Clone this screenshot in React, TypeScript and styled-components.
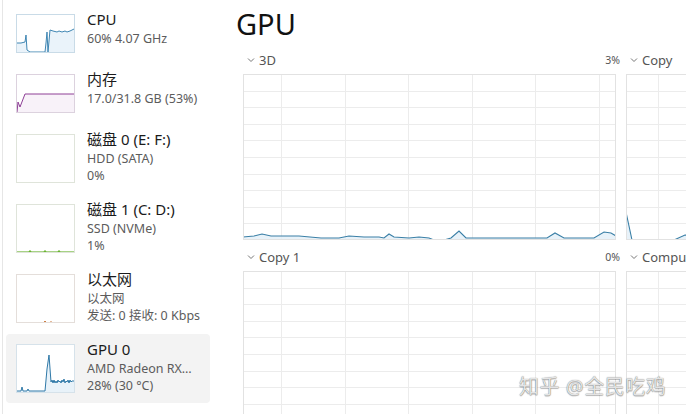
import React from "react";
import styled, { createGlobalStyle } from "styled-components";

const Global = createGlobalStyle`
  html, body { margin: 0; padding: 0; background: #ffffff; }
  body { font-family: "Noto Sans", "Noto Sans CJK SC", sans-serif; overflow: hidden; }
`;

const Page = styled.div`
  position: relative;
  display: flex;
  width: 686px;
  height: 414px;
  overflow: hidden;
  background: #fff;
`;

const Sidebar = styled.nav`
  flex: 0 0 214px;
  margin-left: 2px;
  border-left: 1px solid #e6e6e6;
  padding: 4px 0 0 3px;
  display: flex;
  flex-direction: column;
  gap: 1px;
  box-sizing: border-box;
`;

const Item = styled.div<{ $selected?: boolean }>`
  display: flex;
  align-items: flex-start;
  gap: 12px;
  padding: 10px 10px 10px 10px;
  width: 204px;
  box-sizing: border-box;
  border-radius: 4px;
  background: ${(p) => (p.$selected ? "#f3f3f3" : "transparent")};
`;

const Thumb = styled.div<{ $border: string; $h: number }>`
  flex: 0 0 59px;
  height: ${(p) => p.$h}px;
  box-sizing: border-box;
  border: 1px solid ${(p) => p.$border};
  background: #fff;
  overflow: hidden;
  svg { display: block; }
`;

const Texts = styled.div`
  display: flex;
  flex-direction: column;
  margin-top: -5px;
  margin-bottom: -10px;
  white-space: nowrap;
`;

const ItemTitle = styled.div`
  font-size: 15px;
  line-height: 21px;
  color: #1b1b1b;
`;

const ItemSub = styled.div`
  font-size: 12.5px;
  line-height: 17px;
  color: #5c5c5c;
`;

const Main = styled.main`
  flex: 1 1 auto;
  padding-left: 27px;
  min-width: 0;
  overflow: hidden;
`;

const Title = styled.h1`
  margin: 0 0 0 -7px;
  height: 43px;
  font-size: 29px;
  line-height: 48px;
  font-weight: 400;
  color: #111;
`;

const Grid = styled.div`
  display: grid;
  grid-template-columns: 373px 373px;
  grid-template-rows: 31px 166px 31px 166px;
  column-gap: 10px;
`;

const Head = styled.div`
  display: flex;
  align-items: center;
  padding: 2px 0 0 4px;
  color: #555;
`;

const Label = styled.span`
  font-size: 13px;
  margin-left: 4px;
  flex: 1 1 auto;
  white-space: nowrap;
`;

const Pct = styled.span`
  font-size: 10.5px;
  margin-right: -4px;
  color: #555;
`;

const ChartBox = styled.div`
  width: 373px;
  height: 166px;
  svg { display: block; }
`;

const Watermark = styled.div`
  position: absolute;
  left: 519px;
  top: 373px;
  font-size: 20px;
  line-height: 28px;
  letter-spacing: 0.5px;
  color: rgba(236, 236, 236, 0.95);
  text-shadow: 0 0 1px rgba(0, 0, 0, 0.55), 0 1px 1px rgba(0, 0, 0, 0.25);
  white-space: nowrap;
`;

const Chevron = () => (
  <svg width="8" height="6" viewBox="0 0 8 6">
    <path d="M1 1.5 L4 4.5 L7 1.5" fill="none" stroke="#777" strokeWidth="1" />
  </svg>
);

type Pt = [number, number];

const Spark = ({ pts, h, stroke, fill }: { pts: Pt[]; h: number; stroke: string; fill: string }) => {
  const line = pts.map((p) => p.join(",")).join(" ");
  const area = `0,${h} ${line} 57,${h}`;
  return (
    <svg width="57" height={h} viewBox={`0 0 57 ${h}`}>
      <polygon points={area} fill={fill} />
      <polyline points={line} fill="none" stroke={stroke} strokeWidth="1" />
    </svg>
  );
};

const cpuPts: Pt[] = [
  [0, 28], [4, 28], [8, 27], [9, 20], [10, 35], [13, 37], [20, 37], [28, 37], [29, 28], [30, 17], [31, 37], [33, 15],
  [36, 16], [40, 17], [42, 16], [45, 17], [48, 16], [50, 17], [53, 16], [55, 15], [57, 14],
];
const memPts: Pt[] = [[0, 37], [1, 27], [3, 32], [8, 19], [57, 19]];
const diskPts: Pt[] = [
  [0, 47], [12, 47], [13, 45.5], [14, 47], [27, 47], [28, 45.5], [29, 47], [41, 47], [42, 45.5], [43, 47], [57, 47],
];
const ethPts: Pt[] = [[0, 48], [27, 48], [28, 46], [29, 48], [33, 48], [34, 46.5], [35, 48], [57, 48]];
const gpuPts: Pt[] = [
  [0, 46], [4, 46], [5, 42], [6, 46], [10, 46], [11, 44], [12, 46], [20, 46], [27, 46], [28, 46], [30, 24], [32, 10],
  [34, 37], [35, 35], [36, 38], [37, 35], [38, 38], [39, 36], [40, 38], [41, 35], [42, 37], [43, 36], [44, 38],
  [45, 35], [46, 37], [47, 34], [48, 38], [49, 36], [50, 37], [51, 35], [52, 38], [53, 35], [54, 37], [55, 36], [57, 36],
];

const Chart = ({ offset, pts }: { offset: number; pts?: Pt[] }) => {
  const W = 373;
  const H = 166;
  const hs: number[] = [];
  for (let i = 1; i < 10; i++) hs.push(Math.round((H / 10) * i) + 0.5);
  const vs: number[] = [];
  for (let x = offset; x < W; x += 63.5) vs.push(Math.round(x) + 0.5);
  const line = pts ? pts.map((p) => p.join(",")).join(" ") : "";
  return (
    <svg width={W} height={H} viewBox={`0 0 ${W} ${H}`}>
      {hs.map((y) => (
        <line key={"h" + y} x1="0" x2={W} y1={y} y2={y} stroke="#ececec" strokeWidth="1" />
      ))}
      {vs.map((x) => (
        <line key={"v" + x} x1={x} x2={x} y1="0" y2={H} stroke="#ececec" strokeWidth="1" />
      ))}
      {pts && <polygon points={`0,${H} ${line} ${pts[pts.length - 1][0]},${H}`} fill="#e4f0f8" opacity="0.85" />}
      {pts && <polyline points={line} fill="none" stroke="#3a7fa6" strokeWidth="1.1" />}
      <rect x="0.5" y="0.5" width={W - 1} height={H - 1} fill="none" stroke="#e2e2e2" />
    </svg>
  );
};

const pts3d: Pt[] = [
  [0, 163], [11, 162], [19, 160], [28, 162], [56, 162], [78, 164], [96, 164], [106, 162], [121, 163], [136, 163],
  [141, 164], [146, 160], [151, 163], [166, 164], [176, 163], [186, 164], [191, 166], [201, 166], [208, 164],
  [216, 157], [223, 164], [241, 164], [266, 164], [304, 164], [312, 159], [321, 164], [336, 164], [351, 164],
  [361, 158], [368, 159], [373, 162],
];
const ptsCopy: Pt[] = [[0, 138], [6, 166], [48, 166], [59, 161], [70, 163], [373, 163]];

const items = [
  { title: "CPU", subs: ["60% 4.07 GHz"], h: 39, border: "#c9dbe7", stroke: "#3f86b3", fill: "#eaf3fa", pts: cpuPts },
  { title: "内存", subs: ["17.0/31.8 GB (53%)"], h: 39, border: "#dcd2de", stroke: "#8e3f96", fill: "#f8f2f9", pts: memPts },
  { title: "磁盘 0 (E: F:)", subs: ["HDD (SATA)", "0%"], h: 49, border: "#dfe4da", stroke: "#4ea40b", fill: "#f3f9ee", pts: [[0, 48], [57, 48]] as Pt[] },
  { title: "磁盘 1 (C: D:)", subs: ["SSD (NVMe)", "1%"], h: 49, border: "#dfe4da", stroke: "#4ea40b", fill: "#f3f9ee", pts: diskPts },
  { title: "以太网", subs: ["以太网", "发送: 0 接收: 0 Kbps"], h: 49, border: "#e4deda", stroke: "#c2631e", fill: "#fbf3ee", pts: ethPts },
  { title: "GPU 0", subs: ["AMD Radeon RX…", "28% (30 °C)"], h: 49, border: "#d6e2ea", stroke: "#2f79a8", fill: "#e8f2f9", pts: gpuPts, selected: true },
];

export default function App() {
  return (
    <Page>
      <Global />
      <Sidebar>
        {items.map((it) => (
          <Item key={it.title} $selected={it.selected}>
            <Thumb $border={it.border} $h={it.h}>
              <Spark pts={it.pts} h={it.h - 2} stroke={it.stroke} fill={it.fill} />
            </Thumb>
            <Texts>
              <ItemTitle>{it.title}</ItemTitle>
              {it.subs.map((s) => (
                <ItemSub key={s}>{s}</ItemSub>
              ))}
            </Texts>
          </Item>
        ))}
      </Sidebar>
      <Main>
        <Title>GPU</Title>
        <Grid>
          <Head>
            <Chevron />
            <Label>3D</Label>
            <Pct>3%</Pct>
          </Head>
          <Head>
            <Chevron />
            <Label>Copy</Label>
          </Head>
          <ChartBox>
            <Chart offset={38} pts={pts3d} />
          </ChartBox>
          <ChartBox>
            <Chart offset={32} pts={ptsCopy} />
          </ChartBox>
          <Head>
            <Chevron />
            <Label>Copy 1</Label>
            <Pct>0%</Pct>
          </Head>
          <Head>
            <Chevron />
            <Label>Compute 0</Label>
          </Head>
          <ChartBox>
            <Chart offset={38} />
          </ChartBox>
          <ChartBox>
            <Chart offset={32} />
          </ChartBox>
        </Grid>
      </Main>
      <Watermark>知乎 @全民吃鸡</Watermark>
    </Page>
  );
}
